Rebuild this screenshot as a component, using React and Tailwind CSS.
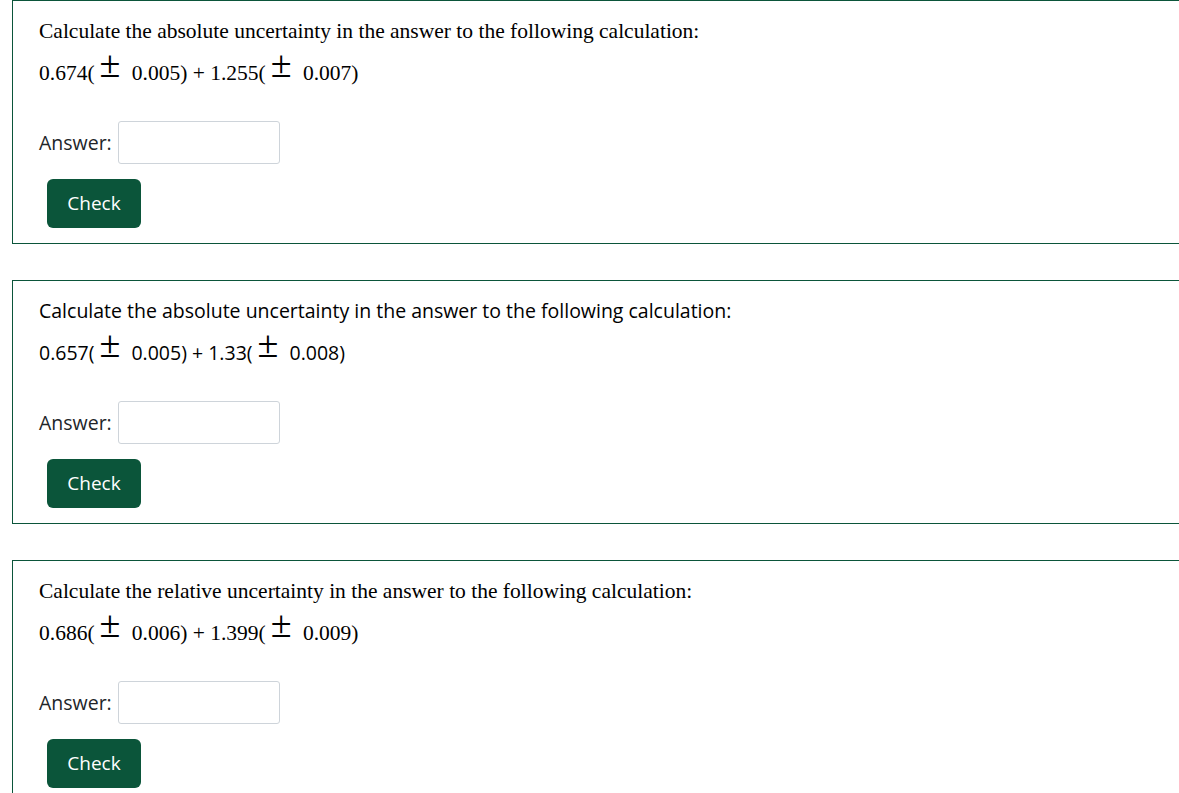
import React from "react";

const serif = "font-['Liberation_Serif','Times_New_Roman',serif]";
const sans = "font-['Open_Sans','Noto_Sans',sans-serif]";

const questions = [
  {
    font: serif,
    size: "text-[21.5px]",
    kind: "absolute",
    a: ["0.674", "0.005"],
    b: ["1.255", "0.007"],
  },
  {
    font: sans,
    size: "text-[19.5px]",
    kind: "absolute",
    a: ["0.657", "0.005"],
    b: ["1.33", "0.008"],
  },
  {
    font: serif,
    size: "text-[21.5px]",
    kind: "relative",
    a: ["0.686", "0.006"],
    b: ["1.399", "0.009"],
  },
];

function PlusMinus() {
  return (
    <span className="font-['Liberation_Serif',serif] text-[38px] leading-[0] align-[3px] ml-[5px] mr-[6px]">
      ±
    </span>
  );
}

function Question({ q }) {
  return (
    <div className="ml-[12px] border-l border-t border-b border-[#0b553a] pl-[26px] pt-[14px] pb-[15px] text-black">
      <p className={`${q.font} ${q.size} leading-[32px]`}>
        Calculate the {q.kind} uncertainty in the answer to the following calculation:
      </p>
      <p className={`${q.font} ${q.size} leading-[32px] h-[32px] mt-[10px] whitespace-pre`}>
        {q.a[0]}(<PlusMinus /> {q.a[1]}) + {q.b[0]}(<PlusMinus /> {q.b[1]})
      </p>
      <div className={`${sans} flex items-center gap-[6px] mt-[32px] text-[19.5px] text-[#212529]`}>
        <label>Answer:</label>
        <input
          type="text"
          className="w-[162px] h-[43px] border border-[#ced4da] rounded-[3px] px-2 outline-none"
        />
      </div>
      <button
        className={`${sans} mt-[15px] ml-[8px] w-[94px] h-[49px] rounded-[6px] bg-[#0b553a] text-white text-[19px]`}
      >
        Check
      </button>
    </div>
  );
}

export default function App() {
  return (
    <div className="min-h-screen bg-white flex flex-col gap-[36px] pb-10">
      {questions.map((q, i) => (
        <Question key={i} q={q} />
      ))}
    </div>
  );
}
